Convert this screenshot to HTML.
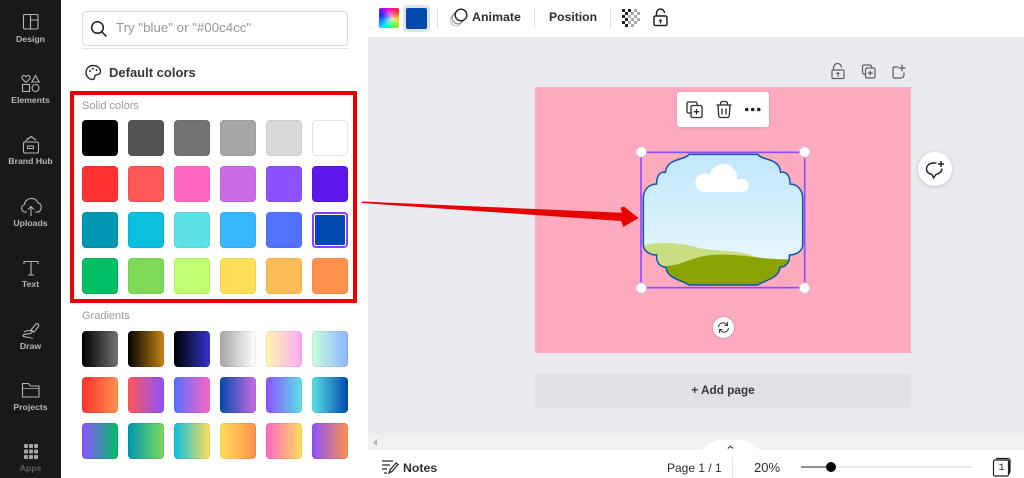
<!DOCTYPE html>
<html><head><meta charset="utf-8">
<style>
html,body{margin:0;padding:0}
body{width:1024px;height:478px;overflow:hidden;position:relative;background:#fff;font-family:"Liberation Sans",sans-serif;}
div,span{position:absolute;box-sizing:border-box}
.t{white-space:nowrap;line-height:1}
.nav{left:0;width:61px;text-align:center;color:#b5b6b8;font-size:8.700px;font-weight:bold;line-height:1}
.s{width:36px;height:36px;border-radius:4px;box-shadow:inset 0 0 0 1px rgba(0,0,0,.06)}
svg{position:absolute;overflow:visible}
</style></head><body>
<div style="left:0;top:0;width:61px;height:478px;background:#18191b"></div>
<svg style="left:0;top:0" width="61" height="478" fill="none" stroke="#b4b5b7" stroke-width="1.100">
<rect x="23.500" y="14.500" width="14.500" height="14.500" rx="1.500"/><path d="M30.500 14.500V29M30.500 20H38"/>
<path d="M26 82.500l-3.300-3.200c-1.700-1.800-.4-4 1.400-3.800.9 .1 1.500 .6 1.900 1.300.4-.7 1-1.200 1.900-1.300 1.800-.2 3.100 2 1.400 3.800z"/>
<path d="M35.500 75.500l3.700 6.500h-7.400z"/><rect x="22.500" y="84.500" width="7" height="7"/><circle cx="35.500" cy="88" r="3.500"/>
<rect x="23.500" y="142" width="15" height="11" rx="1.500"/><path d="M25.500 141l5.500-4.500 5 3.500M27 139l4-2"/><path d="M27.500 146h6v2.500h-6z" stroke-width="1"/>
<path d="M27 212h-1.500c-5 0-5-6.500-1-7.500.5-7 11.500-8.500 13.500-1.500 4.500 0 4.500 9-1 9h-2"/><path d="M31 216v-9M28 209.500l3-3 3 3"/>
<path d="M24 264v-2.500h14v2.500M31 261.500v13.500M28 275h6"/>
<path d="M24 332c4-2.500 8.500-1.500 8 .5-.4 1.800-9 1-9 3 0 2.500 9 1 9.500 3.500M31 330l4.500-5.500c1.800-2 4 0 3 2l-4.500 5.500z"/>
<path d="M22.500 397v-13.500h6l2 2.500h8.500v11z"/><path d="M22.500 388.500H39" stroke-width=".7"/>
</svg>
<svg style="left:0;top:0" width="61" height="478" fill="#a7a8aa">
<rect x="24" y="444" width="4" height="4" rx="1"/><rect x="29" y="444" width="4" height="4" rx="1"/><rect x="34" y="444" width="4" height="4" rx="1"/>
<rect x="24" y="449.500" width="4" height="4" rx="1"/><rect x="29" y="449.500" width="4" height="4" rx="1"/><rect x="34" y="449.500" width="4" height="4" rx="1"/>
<rect x="24" y="455" width="4" height="4" rx="1"/><rect x="29" y="455" width="4" height="4" rx="1"/><rect x="34" y="455" width="4" height="4" rx="1"/>
</svg>
<div class="nav" style="top:35px">Design</div>
<div class="nav" style="top:96px">Elements</div>
<div class="nav" style="top:157px">Brand Hub</div>
<div class="nav" style="top:219px">Uploads</div>
<div class="nav" style="top:280px">Text</div>
<div class="nav" style="top:342px">Draw</div>
<div class="nav" style="top:403px">Projects</div>
<div class="nav" style="top:464px;color:#5d5e60">Apps</div>

<!-- search -->
<div style="left:82px;top:11px;width:266px;height:35px;border:1px solid #d9dadd;border-radius:4px"></div>
<div style="left:82px;top:48px;width:266px;height:1px;background:#e3e4e6"></div>
<svg style="left:90px;top:20px" width="18" height="18" fill="none" stroke="#1c1d20" stroke-width="1.500"><circle cx="7.500" cy="7.500" r="5.800"/><path d="M12 12l4.500 4.500"/></svg>
<div class="t" style="left:116px;top:21px;font-size:13.300px;color:#94979c">Try "blue" or "#00c4cc"</div>
<svg style="left:85px;top:64px" width="17" height="17" fill="none" stroke="#2a2b30" stroke-width="1.400"><path d="M8 1.500C3.500 1.500 1 5 1 8.500s3 7 6.500 7c2.500 0 2-2.500 2.500-4 .6-1.500 5.500 0 5.500-4C15.500 4 12 1.500 8 1.500z"/><circle cx="5" cy="7" r="1" fill="#2a2b30" stroke="none"/><circle cx="8" cy="4.800" r="1" fill="#2a2b30" stroke="none"/><circle cx="11.500" cy="6" r="1" fill="#2a2b30" stroke="none"/></svg>
<div class="t" style="left:109px;top:66px;font-size:13px;font-weight:bold;color:#33353a">Default colors</div>
<div class="t" style="left:82px;top:100.500px;font-size:11px;color:#98999d">Solid colors</div>
<div class="t" style="left:82px;top:311px;font-size:11px;color:#98999d">Gradients</div>

<!-- solid -->
<div class="s" style="left:82px;top:120px;background:#000"></div>
<div class="s" style="left:128px;top:120px;background:#545454"></div>
<div class="s" style="left:174px;top:120px;background:#737373"></div>
<div class="s" style="left:219.500px;top:120px;background:#a6a6a6"></div>
<div class="s" style="left:265.500px;top:120px;background:#d9d9d9"></div>
<div class="s" style="left:311.500px;top:120px;background:#fff;box-shadow:inset 0 0 0 1px #e6e6e8"></div>
<div class="s" style="left:82px;top:166px;background:#ff3131"></div>
<div class="s" style="left:128px;top:166px;background:#ff5757"></div>
<div class="s" style="left:174px;top:166px;background:#ff66c4"></div>
<div class="s" style="left:219.500px;top:166px;background:#cb6ce6"></div>
<div class="s" style="left:265.500px;top:166px;background:#8c52ff"></div>
<div class="s" style="left:311.500px;top:166px;background:#5e17eb"></div>
<div class="s" style="left:82px;top:212px;background:#0097b2"></div>
<div class="s" style="left:128px;top:212px;background:#0cc0df"></div>
<div class="s" style="left:174px;top:212px;background:#5ce1e6"></div>
<div class="s" style="left:219.500px;top:212px;background:#38b6ff"></div>
<div class="s" style="left:265.500px;top:212px;background:#5271ff"></div>
<div class="s" style="left:311.500px;top:212px;background:#004aad;box-shadow:none;border:2px solid #8b3dff;outline:none"><div style="left:0;top:0;width:32px;height:32px;border:1.500px solid #fff;border-radius:2px"></div></div>
<div class="s" style="left:82px;top:258px;background:#00bf63"></div>
<div class="s" style="left:128px;top:258px;background:#7ed957"></div>
<div class="s" style="left:174px;top:258px;background:#c1ff72"></div>
<div class="s" style="left:219.500px;top:258px;background:#ffde59"></div>
<div class="s" style="left:265.500px;top:258px;background:#ffbd59"></div>
<div class="s" style="left:311.500px;top:258px;background:#ff914d"></div>

<!-- gradients -->
<div class="s" style="left:82px;top:331px;background:linear-gradient(90deg,#000,#737373)"></div>
<div class="s" style="left:128px;top:331px;background:linear-gradient(90deg,#000,#c9861a)"></div>
<div class="s" style="left:174px;top:331px;background:linear-gradient(90deg,#000,#3533cd)"></div>
<div class="s" style="left:219.500px;top:331px;background:linear-gradient(90deg,#a6a6a6,#fff)"></div>
<div class="s" style="left:265.500px;top:331px;background:linear-gradient(90deg,#fff7ad,#ffa9f9)"></div>
<div class="s" style="left:311.500px;top:331px;background:linear-gradient(90deg,#c9ffdc,#8fb4ff)"></div>
<div class="s" style="left:82px;top:377px;background:linear-gradient(90deg,#ff3131,#ff914d)"></div>
<div class="s" style="left:128px;top:377px;background:linear-gradient(90deg,#ff5757,#8c52ff)"></div>
<div class="s" style="left:174px;top:377px;background:linear-gradient(90deg,#5170ff,#ff66c4)"></div>
<div class="s" style="left:219.500px;top:377px;background:linear-gradient(90deg,#004aad,#cb6ce6)"></div>
<div class="s" style="left:265.500px;top:377px;background:linear-gradient(90deg,#8c52ff,#5ce1e6)"></div>
<div class="s" style="left:311.500px;top:377px;background:linear-gradient(90deg,#5ce1e6,#004aad)"></div>
<div class="s" style="left:82px;top:423px;background:linear-gradient(90deg,#8c52ff,#00bf63)"></div>
<div class="s" style="left:128px;top:423px;background:linear-gradient(90deg,#0097b2,#7ed957)"></div>
<div class="s" style="left:174px;top:423px;background:linear-gradient(90deg,#0cc0df,#ffde59)"></div>
<div class="s" style="left:219.500px;top:423px;background:linear-gradient(90deg,#ffde59,#ff914d)"></div>
<div class="s" style="left:265.500px;top:423px;background:linear-gradient(90deg,#ff66c4,#ffde59)"></div>
<div class="s" style="left:311.500px;top:423px;background:linear-gradient(90deg,#8c52ff,#ff914d)"></div>

<!-- red box -->
<div style="left:70px;top:91px;width:287px;height:212px;border:4.500px solid #e60000;border-radius:1px"></div>

<!-- canvas -->
<div style="left:368px;top:38px;width:656px;height:412px;background:#e9ebf0"></div>
<div style="left:368px;top:0;width:656px;height:38px;background:#fff;border-bottom:1px solid #e8eaec"></div>
<div style="left:368px;top:435px;width:656px;height:15px;background:#f1f1f2"></div>
<div style="left:368px;top:450px;width:656px;height:28px;background:#fff"></div>
<svg style="left:697px;top:438px" width="68" height="13"><path d="M0 12.500c9 0 11-10.500 22-10.500h22c11 0 13 10.500 24 10.500z" fill="#fff"/><path d="M30.800 10.500l2.700-2.300 2.700 2.300" fill="none" stroke="#333" stroke-width="1.100"/></svg>
<svg style="left:371px;top:438px" width="8" height="9"><path d="M6 1v7L2 4.500z" fill="#b5b6b8"/></svg>

<!-- toolbar -->
<div style="left:379px;top:8px;width:20px;height:20px;border-radius:2px;background:conic-gradient(from 225deg at 60% 50%,#00e0ff,#1a2bff,#ff00d0,#ff2a2a,#ffd000,#40ff40,#00e0ff)"></div>
<div style="left:379px;top:8px;width:20px;height:20px;border-radius:2px;background:radial-gradient(circle at 60% 50%,rgba(255,255,255,.65),rgba(255,255,255,0) 60%)"></div>
<div style="left:403px;top:5px;width:27px;height:27px;border-radius:4px;background:#dfe3e7"></div>
<div style="left:406px;top:8px;width:21px;height:21px;border-radius:2px;background:#004aad"></div>
<div style="left:437px;top:8px;width:1px;height:20px;background:#dfe1e3"></div>
<div style="left:534px;top:8px;width:1px;height:20px;background:#dfe1e3"></div>
<div style="left:610px;top:8px;width:1px;height:20px;background:#dfe1e3"></div>
<svg style="left:449px;top:8px" width="20" height="20" fill="none"><circle cx="7" cy="12" r="5.800" stroke="#c4c5c8" stroke-width="1.200"/><circle cx="9" cy="10" r="5.800" stroke="#8d8f93" stroke-width="1.200"/><circle cx="12" cy="7" r="5.800" stroke="#222" stroke-width="1.400" fill="#fff"/></svg>
<div class="t" style="left:472px;top:11px;font-size:12.400px;font-weight:bold;color:#2c2e33">Animate</div>
<div class="t" style="left:549px;top:11px;font-size:12.200px;font-weight:bold;color:#2c2e33">Position</div>
<svg style="left:622px;top:9px" width="18" height="18"><g fill="#222"><rect x="0" y="0" width="3" height="3"/><rect x="6" y="0" width="3" height="3"/><rect x="3" y="3" width="3" height="3"/><rect x="0" y="6" width="3" height="3"/><rect x="3" y="9" width="3" height="3"/><rect x="0" y="12" width="3" height="3"/><rect x="3" y="15" width="3" height="3"/></g><g fill="#aaa"><rect x="12" y="0" width="3" height="3"/><rect x="9" y="3" width="3" height="3"/><rect x="15" y="3" width="3" height="3"/><rect x="6" y="6" width="3" height="3"/><rect x="12" y="6" width="3" height="3"/><rect x="9" y="9" width="3" height="3"/><rect x="15" y="9" width="3" height="3"/><rect x="6" y="12" width="3" height="3"/><rect x="12" y="12" width="3" height="3"/><rect x="9" y="15" width="3" height="3"/></g></svg>
<svg style="left:653px;top:8px" width="15" height="18" fill="none" stroke="#222" stroke-width="1.500"><rect x="1" y="8" width="13" height="9.500" rx="1.500"/><path d="M3.500 8V5a4 4 0 0 1 8 0"/><circle cx="7.500" cy="12.500" r="1.300" fill="#222" stroke="none"/><path d="M7.500 13v2.500" stroke-width="1.200"/></svg>

<!-- top icons -->
<svg style="left:830px;top:62px" width="80" height="18" fill="none" stroke="#5a5c62" stroke-width="1.200">
<rect x="2" y="8" width="12" height="8.500" rx="1"/><path d="M3.500 8V5.500a4 4 0 0 1 8 0"/><path d="M8 10.500v4.500M6.500 12L8 10.500 9.500 12" stroke-width="1"/>
<rect x="32.500" y="3" width="9" height="9" rx="1.500"/><rect x="35.500" y="6" width="9.500" height="10" rx="1.500" fill="#e9ebf0"/><path d="M40.200 8.500v5M37.700 11h5"/>
<path d="M68 5h-3.500a1.500 1.500 0 0 0-1.500 1.500v8a1.500 1.500 0 0 0 1.500 1.500h6.500a3 3 0 0 0 3-3v-2.500"/><path d="M72 2.500v7M68.500 6h7"/>
</svg>

<!-- page -->
<div style="left:535px;top:87px;width:376px;height:266px;background:#ffabbf"></div>
<div style="left:535px;top:374px;width:376px;height:34px;background:#dfe1e7;border-radius:3px"></div>
<div class="t" style="left:535px;top:385px;width:376px;text-align:center;font-size:11.800px;font-weight:bold;color:#36383d">+ Add page</div>

<!-- float toolbar -->
<div style="left:677px;top:92px;width:92px;height:35px;background:#fff;border-radius:3px;box-shadow:0 1px 4px rgba(0,0,0,.12)"></div>
<svg style="left:685px;top:100px" width="80" height="20" fill="none" stroke="#2a2b30" stroke-width="1.300">
<path d="M7 13H3.500A1.500 1.500 0 0 1 2 11.500v-8A1.500 1.500 0 0 1 3.500 2h7A1.500 1.500 0 0 1 12 3.500V5"/><rect x="6" y="5.500" width="11" height="12" rx="1.500"/><path d="M11.500 9v5.500M8.800 11.700h5.400"/>
<path d="M31.500 5h15M35.500 5V3.500a2 2 0 0 1 2-2h3a2 2 0 0 1 2 2V5"/><path d="M33 5l.7 10.500a2 2 0 0 0 2 2h6.600a2 2 0 0 0 2-2L45 5"/><path d="M37 8.500v6M41 8.500v6"/>
<g fill="#1c1d20" stroke="none"><circle cx="61.700" cy="9.500" r="1.800"/><circle cx="67.700" cy="9.500" r="1.800"/><circle cx="73.700" cy="9.500" r="1.800"/></g>
</svg>

<!-- frame -->
<svg style="left:620px;top:140px" width="200" height="160" viewBox="0 0 600 480">
<defs>
<linearGradient id="sky" x1="0" y1="0" x2="0" y2="1"><stop offset="0" stop-color="#bfe6fb"/><stop offset="1" stop-color="#effcff"/></linearGradient>
<clipPath id="fr"><path d="M207 43H413C425 62 478 52 482 97C498 94 511 106 510 132C530 132 548 148 548 175V315C548 332 530 345 508 345C510 365 500 380 480 382C478 415 435 420 413 435H207C185 420 140 415 138 382C118 380 108 365 110 345C90 345 70 333 70 315V175C70 148 88 132 110 132C109 106 122 94 136 97C142 52 195 62 207 43Z"/></clipPath>
</defs>
<g clip-path="url(#fr)">
<rect x="60" y="30" width="500" height="420" fill="url(#sky)"/>
<path d="M60 318C110 305 170 305 230 322C290 338 360 322 430 362L400 400H60Z" fill="#c9de82"/>
<path d="M120 378C190 382 210 345 300 344C390 344 410 358 510 358V450H120Z" fill="#8aa300"/>
</g>
<path d="M207 43H413C425 62 478 52 482 97C498 94 511 106 510 132C530 132 548 148 548 175V315C548 332 530 345 508 345C510 365 500 380 480 382C478 415 435 420 413 435H207C185 420 140 415 138 382C118 380 108 365 110 345C90 345 70 333 70 315V175C70 148 88 132 110 132C109 106 122 94 136 97C142 52 195 62 207 43Z" fill="none" stroke="#0f56ad" stroke-width="4.500"/>
<g fill="#fff"><circle cx="254" cy="128" r="28"/><circle cx="310" cy="114" r="42"/><circle cx="366" cy="136" r="20"/><rect x="254" y="120" width="112" height="36"/></g>
<rect x="63" y="37" width="491" height="406" fill="none" stroke="#8b4dff" stroke-width="5"/>
<g fill="#fff" stroke="#c9c9cf" stroke-width="2.500"><circle cx="64" cy="36" r="15.500"/><circle cx="554" cy="36" r="15.500"/><circle cx="64" cy="444" r="15.500"/><circle cx="554" cy="444" r="15.500"/></g>
</svg>

<!-- rotate -->
<div style="left:713px;top:317px;width:21px;height:21px;background:#fff;border-radius:50%;box-shadow:0 0 2px rgba(0,0,0,.3)"></div>
<svg style="left:717px;top:321px" width="13" height="13" fill="none" stroke="#3a3b40" stroke-width="1.100"><path d="M1.500 6a4.500 4.500 0 0 1 7.500-3L10.500 4.500M10.500 1v3.500H7.500"/><path d="M11.500 7a4.500 4.500 0 0 1-7.500 3L2.500 8.500M2.500 12V8.500h3"/></svg>

<!-- comment btn -->
<div style="left:918px;top:152px;width:34px;height:34px;background:#fff;border-radius:50%;box-shadow:0 1px 4px rgba(0,0,0,.18)"></div>
<svg style="left:925px;top:160px" width="20" height="19" fill="none" stroke="#1e1f24" stroke-width="1.400"><path d="M11.500 3H9C4.500 3 1.500 5.500 1.500 9c0 3 2.500 5 5.500 5.500L8.500 18l2.500-3.500c2.800-.8 6-2.500 6-6"/><path d="M16 1v6M13 4h6"/></svg>

<!-- arrow -->
<svg style="left:0;top:0" width="1024" height="478"><path d="M362 201.500L622 212.800L620.500 208L624 206.500L638.500 218L623.500 227L621 221L362 203Z" fill="#e60000"/></svg>

<!-- bottom -->
<svg style="left:382px;top:460px" width="17" height="14" fill="none" stroke="#2a2b30" stroke-width="1.300"><path d="M0 1h11M0 5h8M0 9h5M2 13h3"/><path d="M7 13l1-3 6-7 2 1.500-6 7z"/></svg>
<div class="t" style="left:403px;top:462px;font-size:12.300px;font-weight:bold;color:#2c2e33">Notes</div>
<div class="t" style="left:667px;top:462px;font-size:12px;color:#2c2e33">Page 1 / 1</div>
<div style="left:732px;top:457px;width:1px;height:21px;background:#e4e5e7"></div>
<div class="t" style="left:754px;top:461px;font-size:13px;color:#2c2e33">20%</div>
<div style="left:801px;top:466px;width:171px;height:2px;background:#e5e7ea"></div>
<div style="left:801px;top:466px;width:29px;height:2px;background:#8f9095"></div>
<div style="left:826px;top:462px;width:10px;height:10px;background:#000;border-radius:50%"></div>
<svg style="left:992px;top:457px" width="22" height="20" fill="none" stroke="#222" stroke-width="1.200"><path d="M4 1.500h12a2 2 0 0 1 2 2V15"/><path d="M3 3.500h13a2 2 0 0 1 1.500 2V17"/><rect x="1.500" y="3" width="15" height="16" rx="1.500" fill="#fff"/></svg>
<div class="t" style="left:994px;top:464px;width:15px;text-align:center;font-size:10px;color:#222;font-family:'Liberation Mono',monospace">1</div>
</body></html>
